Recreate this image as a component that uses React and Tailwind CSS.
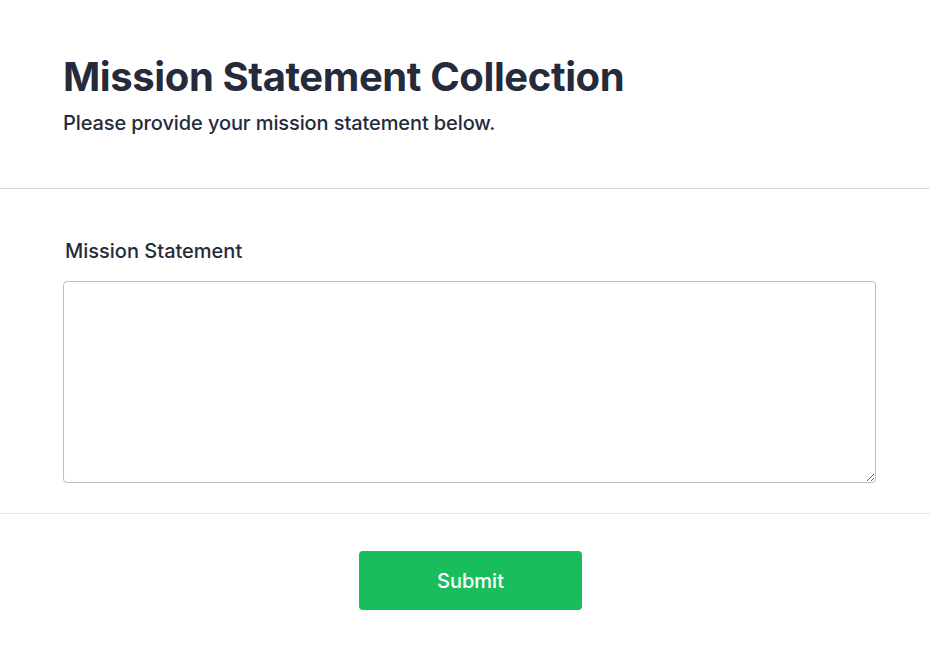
export default function App() {
  return (
    <div className="min-h-screen bg-white text-[#252b3b]" style={{ fontFamily: "Inter, 'Noto Sans', sans-serif" }}>
      <div className="pl-[63px] pr-[54px] pt-[57px] pb-[51px]">
        <h1 className="text-[40px] font-bold leading-[40px] tracking-[-0.01em]">Mission Statement Collection</h1>
        <p className="mt-[12px] text-xl font-medium leading-7 tracking-[-0.005em]">Please provide your mission statement below.</p>
      </div>
      <div className="border-t border-[#d9d8e6]" />
      <div className="pl-[63px] pr-[54px] pt-[48px] pb-[30px]">
        <label className="block pl-[2px] text-xl font-medium leading-7">Mission Statement</label>
        <textarea className="mt-[16px] block w-full h-[202px] rounded border border-[#bdbccd] p-3 text-base outline-none" />
      </div>
      <div className="border-t border-[#e6e5ee]" />
      <div className="flex justify-center pl-[65px] pr-[54px] pt-[37px]">
        <button className="w-[223px] h-[59px] rounded bg-[#19bd5c] text-xl font-medium text-white">Submit</button>
      </div>
    </div>
  );
}
